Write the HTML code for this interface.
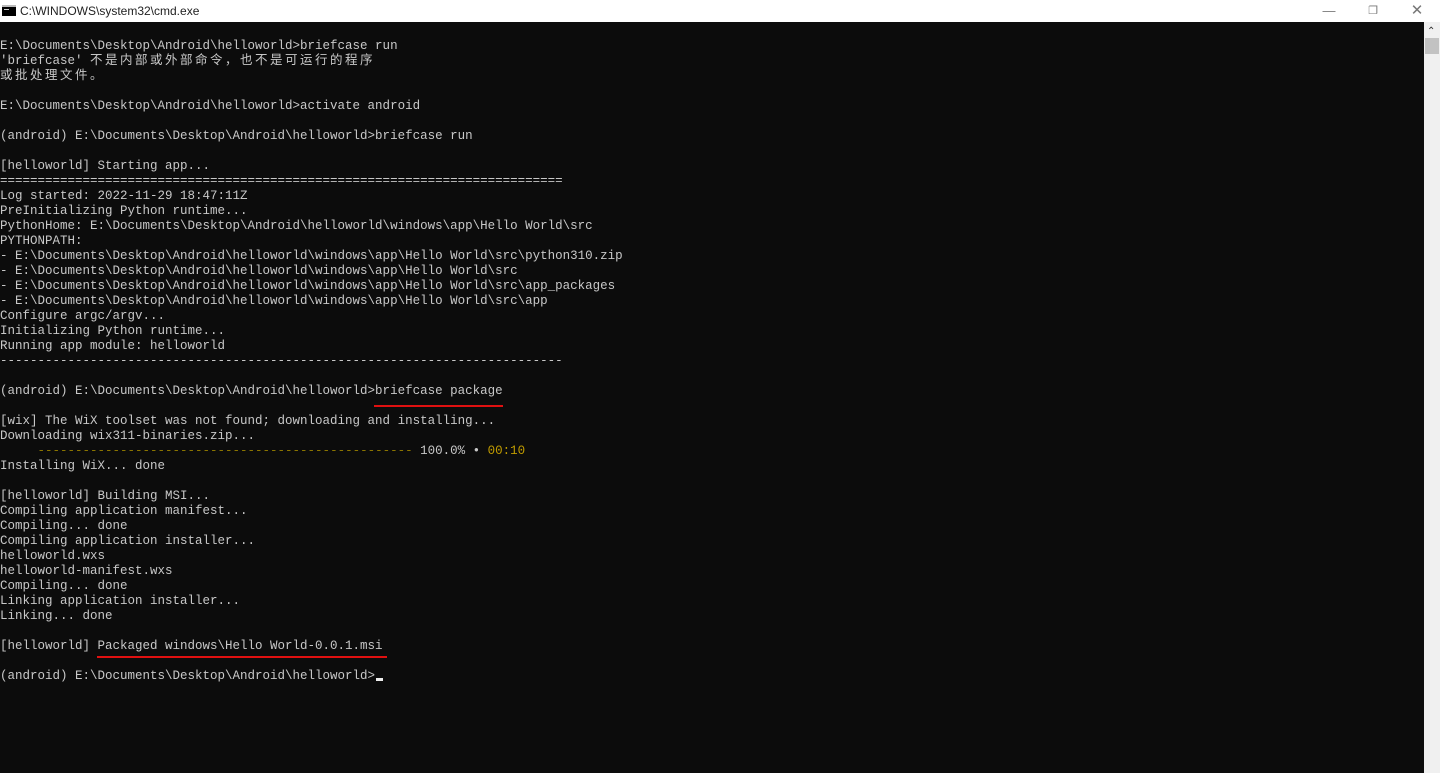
<!DOCTYPE html>
<html><head><meta charset="utf-8"><style>
html,body{margin:0;padding:0;width:1440px;height:773px;overflow:hidden;background:#0c0c0c}
#title{position:absolute;left:0;top:0;width:1440px;height:22px;background:#fff;font:12px "Liberation Sans",sans-serif;color:#222}
#title .t{position:absolute;left:20px;top:4px}
#icon{position:absolute;left:2px;top:5px;width:14px;height:11px;background:#000;border-top:2px solid #bbb;box-sizing:border-box}
#icon:after{content:"";position:absolute;left:2px;top:2px;width:5px;height:3px;border-top:1px solid #ccc}
.wb{position:absolute;top:0;height:22px;width:46px;color:#777;font:13px "Liberation Sans",sans-serif;text-align:center;line-height:22px}
#sb{position:absolute;left:1424px;top:22px;width:16px;height:751px;background:#f0f0f0}
#thumb{position:absolute;left:1425px;top:38px;width:14px;height:16px;background:#c2c2c2}
pre{position:absolute;left:0;top:39px;margin:0;font:12.5px/15px "Liberation Mono","Noto Sans CJK SC",monospace;color:#c8c8c8}
.c{letter-spacing:2.5px}
.y{color:#c19c00}
.d{color:#8a7400}
.u{position:absolute;height:2px;background:#e01010}
#cur{position:absolute;left:376px;top:678px;width:7px;height:3px;background:#eee}
</style></head><body>
<div id="title"><div id="icon"></div><span class="t">C:\WINDOWS\system32\cmd.exe</span>
<div class="wb" style="left:1306px;font-weight:100">&#8212;</div>
<div class="wb" style="left:1350px;font-size:11px">&#10064;</div>
<div class="wb" style="left:1394px;font-size:15px">&#10005;</div></div>
<div id="sb"><div style="position:absolute;left:3px;top:4px;font:10px sans-serif;color:#333">&#8963;</div></div>
<div id="thumb"></div>
<pre>E:\Documents\Desktop\Android\helloworld&gt;briefcase run
'briefcase' <span class="c">不是内部或外部命令，也不是可运行的程序</span>
<span class="c">或批处理文件。</span>

E:\Documents\Desktop\Android\helloworld&gt;activate android

(android) E:\Documents\Desktop\Android\helloworld&gt;briefcase run

[helloworld] Starting app...
===========================================================================
Log started: 2022-11-29 18:47:11Z
PreInitializing Python runtime...
PythonHome: E:\Documents\Desktop\Android\helloworld\windows\app\Hello World\src
PYTHONPATH:
- E:\Documents\Desktop\Android\helloworld\windows\app\Hello World\src\python310.zip
- E:\Documents\Desktop\Android\helloworld\windows\app\Hello World\src
- E:\Documents\Desktop\Android\helloworld\windows\app\Hello World\src\app_packages
- E:\Documents\Desktop\Android\helloworld\windows\app\Hello World\src\app
Configure argc/argv...
Initializing Python runtime...
Running app module: helloworld
---------------------------------------------------------------------------

(android) E:\Documents\Desktop\Android\helloworld&gt;briefcase package

[wix] The WiX toolset was not found; downloading and installing...
Downloading wix311-binaries.zip...
     <span class="d">--------------------------------------------------</span> 100.0% • <span class="y">00:10</span>
Installing WiX... done

[helloworld] Building MSI...
Compiling application manifest...
Compiling... done
Compiling application installer...
helloworld.wxs
helloworld-manifest.wxs
Compiling... done
Linking application installer...
Linking... done

[helloworld] Packaged windows\Hello World-0.0.1.msi

(android) E:\Documents\Desktop\Android\helloworld&gt;</pre>
<div class="u" style="left:374px;top:405px;width:129px"></div>
<div class="u" style="left:97px;top:656px;width:290px"></div>
<div id="cur"></div>
</body></html>
